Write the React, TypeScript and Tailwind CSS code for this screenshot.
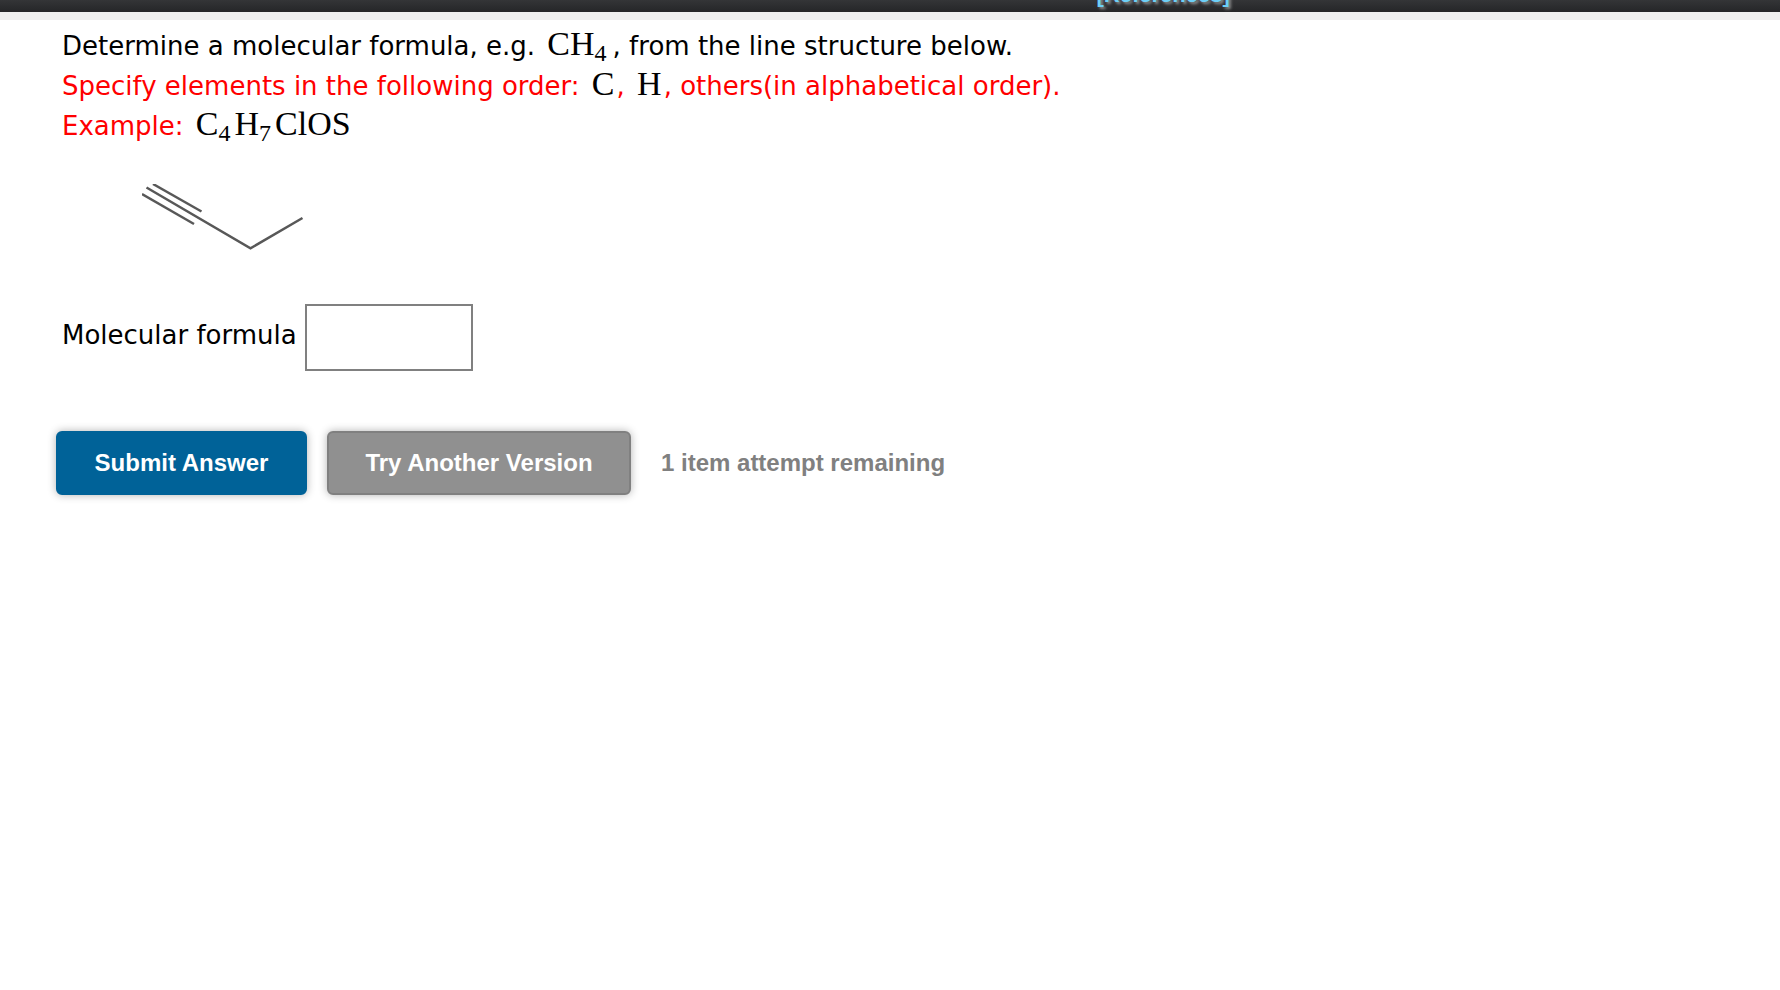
import React, { useState } from 'react';

interface FormulaProps {
  // Elements and counts in reading order, numbers are drawn as subscripts
  parts: (string | number)[];
}

const Formula: React.FC<FormulaProps> = ({ parts }) => (
  <span className="mr-0.5 ml-1 font-['Liberation_Serif',serif] text-[34px] leading-none text-black">
    {parts.map((part, i) =>
      typeof part === 'number' ? (
        <sub key={i} className="mr-1 text-2xl leading-none">{part}</sub>
      ) : (
        <span key={i}>{part}</span>
      )
    )}
  </span>
);

const LineStructure: React.FC = () => (
  <svg
    width="162"
    height="68"
    viewBox="0 0 162 68"
    fill="none"
    stroke="#585858"
    strokeWidth="2.5"
    role="img"
    aria-label="Line structure"
  >
    <path d="M4.5 3.5 108.5 64.3 160.5 34" />
    <path d="M11 0 59.5 27.5" />
    <path d="M0 10 52 40" />
  </svg>
);

export default function App() {
  const [answer, setAnswer] = useState('');

  return (
    <div className="min-h-screen bg-white font-['DejaVu_Sans',sans-serif] text-[26px] leading-10 text-black">
      {/* Bottom edge of the toolbar */}
      <header className="flex h-5 flex-col border-b-8 border-[#efefef] bg-[#2b2c2e]">
        <div className="flex h-3 items-end overflow-hidden bg-linear-to-b from-[#343537] to-[#252628] pl-[61.6%]">
          <a
            href="#references"
            className="font-['Liberation_Sans',sans-serif] text-[22px] leading-[34px] font-bold text-[#6dcff6] [text-shadow:2px_2px_3px_#999]"
          >
            [References]
          </a>
        </div>
      </header>

      <main className="px-14 pt-1.5">
        <div className="px-1.5">
          <p className="h-10 whitespace-nowrap">
            Determine a molecular formula, e.g. <Formula parts={['CH', 4]} />, from the line structure below.
          </p>
          <p className="h-10 whitespace-nowrap text-[#ff0000]">
            Specify elements in the following order: <Formula parts={['C']} />, <Formula parts={['H']} />, others(in
            alphabetical order).
          </p>
          <p className="h-10 whitespace-nowrap text-[#ff0000]">
            Example: <Formula parts={['C', 4, 'H', 7, 'ClOS']} />
          </p>

          <div className="mt-[38px] ml-20">
            <LineStructure />
          </div>

          <div className="mt-13 flex items-center gap-2">
            <label htmlFor="formula" className="pb-1.5">Molecular formula</label>
            <input
              id="formula"
              type="text"
              value={answer}
              onChange={e => setAnswer(e.target.value)}
              className="h-[67px] w-42 border-2 border-[#808080] bg-white px-2 outline-none"
            />
          </div>
        </div>

        <div className="mt-15 flex items-center gap-5 font-['Liberation_Sans',sans-serif] text-2xl font-bold">
          <button
            type="button"
            className="h-16 min-w-[251px] rounded-md border-2 border-[#006298] bg-[#006298] px-9 text-white shadow-[0_0_8px_rgba(0,0,0,0.3)]"
          >
            Submit Answer
          </button>
          <button
            type="button"
            className="h-16 min-w-[304px] rounded-md border-2 border-[#808080] bg-[#909090] px-9 text-white shadow-[0_0_8px_rgba(0,0,0,0.3)]"
          >
            Try Another Version
          </button>
          <span className="ml-2.5 text-[#808080]">1 item attempt remaining</span>
        </div>
      </main>
    </div>
  );
}
